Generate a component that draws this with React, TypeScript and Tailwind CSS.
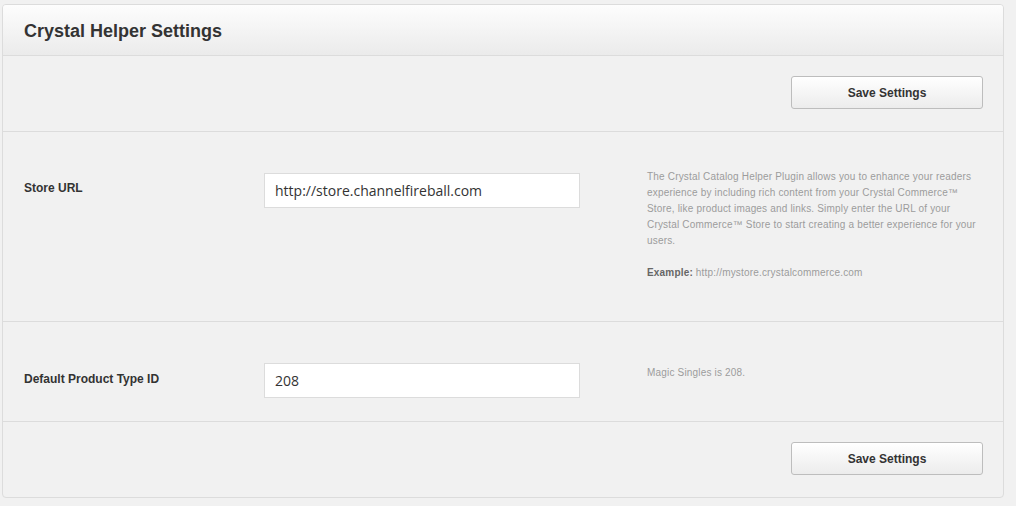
import React from "react";

const arial = { fontFamily: '"Liberation Sans", Arial, sans-serif' };

function SaveButton() {
  return (
    <button
      className="w-[192px] h-[33px] rounded-[3px] border border-[#bdbdbd] bg-gradient-to-b from-white to-[#ececec] text-[12px] font-bold text-[#333] shadow-[inset_0_1px_0_#fff]"
      style={arial}
    >
      Save Settings
    </button>
  );
}

export default function App() {
  return (
    <div className="w-[1016px] h-[506px] bg-[#f1f1f1] pt-[4px] pl-[2px]" style={arial}>
      <div className="w-[1002px] h-[494px] border border-[#dcdcdc] rounded-[4px] bg-[#f1f1f1] overflow-hidden flex flex-col">
        <div className="h-[51px] shrink-0 border-b border-[#dcdcdc] bg-gradient-to-b from-[#fdfdfd] to-[#ebebeb] flex items-center pl-[21px]">
          <h1 className="text-[18px] font-bold text-[#333] leading-none mt-[1px]">Crystal Helper Settings</h1>
        </div>

        <div className="h-[76px] shrink-0 border-b border-[#dcdcdc] flex justify-end pt-[20px] pr-[20px]">
          <SaveButton />
        </div>

        <div className="h-[190px] shrink-0 border-b border-[#dcdcdc] flex items-start pl-[21px] pt-[36px]">
          <div className="w-[240px] mt-[12px] text-[12px] leading-[16px] font-bold text-[#333]">Store URL</div>
          <input
            readOnly
            value="http://store.channelfireball.com"
            className="w-[316px] h-[35px] mt-[5px] border border-[#dcdcdc] bg-white px-[10px] text-[14px] text-[#333] outline-none"
            style={{ fontFamily: '"Open Sans", sans-serif' }}
          />
          <div className="ml-[67px] w-[336px] text-[10px] leading-[16px] tracking-[0.18px] text-[#9c9c9c] mt-[1px]">
            <p>
              The Crystal Catalog Helper Plugin allows you to enhance your readers experience by including rich
              content from your Crystal Commerce™ Store, like product images and links. Simply enter the URL of
              your Crystal Commerce™ Store to start creating a better experience for your users.
            </p>
            <p className="mt-[16px]">
              <span className="font-bold text-[#666]">Example:</span> http://mystore.crystalcommerce.com
            </p>
          </div>
        </div>

        <div className="h-[100px] shrink-0 border-b border-[#dcdcdc] flex items-start pl-[21px] pt-[41px]">
          <div className="w-[240px] mt-[8px] text-[12px] leading-[16px] font-bold text-[#333]">Default Product Type ID</div>
          <input
            readOnly
            value="208"
            className="w-[316px] h-[35px] border border-[#dcdcdc] bg-white px-[10px] text-[14px] text-[#333] outline-none"
            style={{ fontFamily: '"Open Sans", sans-serif' }}
          />
          <div className="ml-[67px] mt-[2px] text-[10px] leading-[16px] tracking-[0.18px] text-[#9c9c9c]">Magic Singles is 208.</div>
        </div>

        <div className="flex-1 flex justify-end pt-[20px] pr-[20px]">
          <SaveButton />
        </div>
      </div>
    </div>
  );
}
